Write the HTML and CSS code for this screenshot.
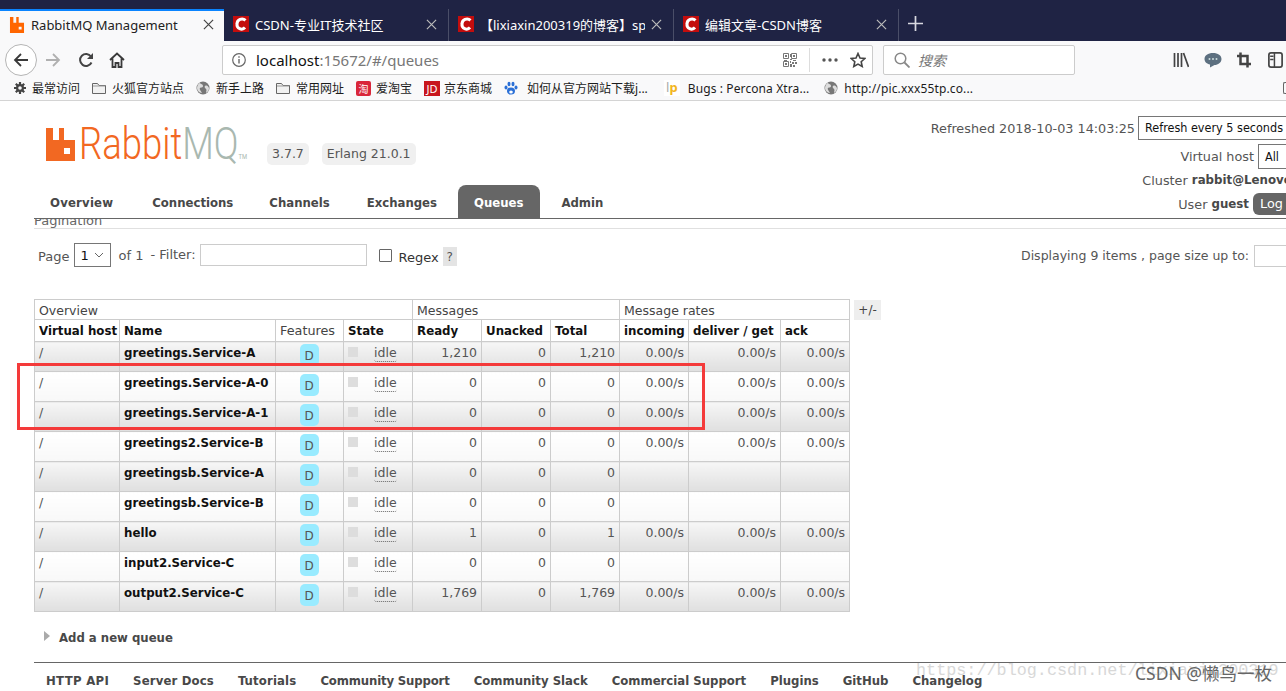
FILE: index.html
```html
<!DOCTYPE html>
<html lang="en">
<head>
<meta charset="utf-8">
<title>RabbitMQ Management</title>
<link rel="stylesheet" href="styles.css">
</head>
<body>
<svg class="defs" width="0" height="0">
  <symbol id="rabbit" viewBox="0 0 29 33"><path fill-rule="evenodd" d="M0 0h7v12h6V0h5v12h11v21H0zM18 20v6h6v-6z"/></symbol>
  <symbol id="csdn" viewBox="0 0 16 16"><rect width="16" height="16" fill="#c30d0d"/><path d="M12.5 4.400A5 5 0 0 0 4 8a4.600 4.600 0 0 0 8 3.600" fill="none" stroke="#fff" stroke-width="3"/></symbol>
  <symbol id="folder" viewBox="0 0 14 14"><path d="M.5 2.500h5l1.500 2h6.500v8H.5z" fill="#f1f1f1" stroke="#666"/><path d="M1 5h12" stroke="#999"/></symbol>
  <symbol id="globe" viewBox="0 0 14 14"><circle cx="7" cy="7" r="6.500" fill="#777"/><path d="M3 2c2 1 4 1 4 3S5 6 4 7s1 3 2 5c-3 0-5-3-5-5s1-3 2-5zM9 5c2-1 3 0 4 2 0 2-1 4-3 5 0-2 1-3 0-4S8 6 9 5z" fill="#ddd"/></symbol>
  <symbol id="close" viewBox="0 0 12 12"><path d="M1 1l10 10M11 1L1 11" fill="none" stroke="currentColor" stroke-width="1.300"/></symbol>
</svg>

<div class="browser">
  <div class="tabstrip">
    <div class="tab tab-active">
      <svg class="favicon rabbit-fav"><use href="#rabbit"/></svg>
      <span class="tab-title">RabbitMQ Management</span>
      <svg class="tab-close"><use href="#close"/></svg>
    </div>
    <div class="tab">
      <svg class="favicon"><use href="#csdn"/></svg>
      <span class="tab-title">CSDN-专业IT技术社区</span>
      <svg class="tab-close"><use href="#close"/></svg>
    </div>
    <div class="tab">
      <svg class="favicon"><use href="#csdn"/></svg>
      <span class="tab-title">【lixiaxin200319的博客】spring</span>
      <svg class="tab-close"><use href="#close"/></svg>
    </div>
    <div class="tab">
      <svg class="favicon"><use href="#csdn"/></svg>
      <span class="tab-title">编辑文章-CSDN博客</span>
      <svg class="tab-close"><use href="#close"/></svg>
    </div>
    <svg class="new-tab" viewBox="0 0 14 14"><path d="M7 0v14M0 7h14" stroke="#d8d8e0" stroke-width="1.600"/></svg>
  </div>

  <div class="navbar">
    <div class="back-btn">
      <svg viewBox="0 0 16 16" class="nav-ico"><path d="M15 8H2M8 2L2 8l6 6" fill="none" stroke="#3a3a3a" stroke-width="1.800"/></svg>
    </div>
    <svg viewBox="0 0 16 16" class="nav-ico forward"><path d="M1 8h13M8 2l6 6-6 6" fill="none" stroke="#b0b0b0" stroke-width="1.800"/></svg>
    <svg viewBox="0 0 16 16" class="nav-ico reload"><path d="M13.500 10.500A6 6 0 1 1 13 4.500" fill="none" stroke="#444" stroke-width="2"/><path d="M15 1v6H9z" fill="#444"/></svg>
    <svg viewBox="0 0 16 16" class="nav-ico home"><path d="M1 8l7-6.500L15 8M3.500 6.500V15h3v-4h3v4h3V6.500" fill="none" stroke="#3a3a3a" stroke-width="1.800"/></svg>
    <div class="urlbar">
      <svg viewBox="0 0 14 14" class="info"><circle cx="7" cy="7" r="6.300" fill="none" stroke="#666" stroke-width="1.200"/><path d="M7 6v4.500M7 3.200v1.500" stroke="#666" stroke-width="1.400"/></svg>
      <span class="url"><span class="url-host">localhost</span>:15672/#/queues</span>
      <svg viewBox="0 0 14 14" class="qr"><path d="M.5.500h5v5h-5zM8.500.500h5v5h-5zM.5 8.500h5v5h-5z" fill="none" stroke="#777"/><path d="M2 2h2v2H2zM10 2h2v2h-2zM2 10h2v2H2zM7 1h1v3H7zM7 6h2v1H7zM10 7h3v1h-3zM1 7h3v1H1zM7 8h1v2H7zM9 9h2v2H9zM12 9h2v2h-2zM7 11h2v3H7zM10 12h2v2h-2z" fill="#777"/></svg>
      <span class="url-sep"></span>
      <svg viewBox="0 0 16 4" class="dots"><circle cx="2" cy="2" r="1.700" fill="#555"/><circle cx="8" cy="2" r="1.700" fill="#555"/><circle cx="14" cy="2" r="1.700" fill="#555"/></svg>
      <svg viewBox="0 0 16 16" class="star"><path d="M8 1.500l2 4.500 4.800.5-3.600 3.200 1 4.800L8 12.100l-4.200 2.400 1-4.800L1.200 6.500 6 6z" fill="none" stroke="#444" stroke-width="1.600"/></svg>
    </div>
    <div class="searchbar">
      <svg viewBox="0 0 16 16" class="lens"><circle cx="6.500" cy="6.500" r="5.300" fill="none" stroke="#888" stroke-width="1.500"/><path d="M10.500 10.500L15.500 15.500" stroke="#888" stroke-width="1.800"/></svg>
      <span class="search-hint">搜索</span>
    </div>
    <svg viewBox="0 0 16 16" class="tool library"><path d="M1.500 1v14M5 1v14M8.500 1v14M10.500 1l5 14" stroke="#444" stroke-width="1.700" fill="none"/></svg>
    <svg viewBox="0 0 18 16" class="tool speech"><path d="M9 1c5 0 8.500 2.500 8.500 6s-3.500 6-7 6L6 15.500V12.500C3 12 .5 10 .5 7 .5 3.500 4 1 9 1z" fill="#5d7080"/><circle cx="5.500" cy="7" r="1" fill="#cdd"/><circle cx="9" cy="7" r="1" fill="#cdd"/><circle cx="12.500" cy="7" r="1" fill="#cdd"/></svg>
    <svg viewBox="0 0 14 15" class="tool crop"><path d="M3.500 0v11.500H14M0 3.500h10.500V15" fill="none" stroke="#444" stroke-width="2.500"/></svg>
    <svg viewBox="0 0 14 15" class="tool sidebar"><rect x=".8" y=".8" width="12.400" height="13.400" rx="2" fill="none" stroke="#444" stroke-width="1.600"/><path d="M6 1v13M2 4h3M2 7h3" stroke="#444" stroke-width="1.400"/></svg>
  </div>

  <div class="bookmarks">
    <span class="bm"><svg viewBox="0 0 14 14" class="bm-ico gear"><path d="M7 1v12M1 7h12M2.800 2.800l8.400 8.400M11.200 2.800l-8.400 8.400" stroke="#444" stroke-width="2.200"/><circle cx="7" cy="7" r="4" fill="#444"/><circle cx="7" cy="7" r="1.800" fill="#f9f9fa"/></svg>最常访问</span>
    <span class="bm"><svg class="bm-ico"><use href="#folder"/></svg>火狐官方站点</span>
    <span class="bm"><svg class="bm-ico"><use href="#globe"/></svg>新手上路</span>
    <span class="bm"><svg class="bm-ico"><use href="#folder"/></svg>常用网址</span>
    <span class="bm"><span class="bm-badge taobao">淘</span>爱淘宝</span>
    <span class="bm"><span class="bm-badge jd">JD</span>京东商城</span>
    <span class="bm"><svg viewBox="0 0 14 14" class="bm-ico baidu"><ellipse cx="7" cy="10" rx="4" ry="3.500" fill="#2a6fd6"/><ellipse cx="2" cy="6.500" rx="1.500" ry="2" fill="#2a6fd6"/><ellipse cx="5" cy="3" rx="1.500" ry="2.200" fill="#2a6fd6"/><ellipse cx="9" cy="3" rx="1.500" ry="2.200" fill="#2a6fd6"/><ellipse cx="12" cy="6.500" rx="1.500" ry="2" fill="#2a6fd6"/><ellipse cx="7" cy="11" rx="1.800" ry="1.500" fill="#fff"/></svg>如何从官方网站下载j...</span>
    <span class="bm bm-lp"><span class="lp"><span class="lp-l">l</span><span class="lp-p">p</span></span>Bugs : Percona Xtra...</span>
    <span class="bm bm-latin"><svg class="bm-ico"><use href="#globe"/></svg>http://pic.xxx55tp.co...</span>
    <span class="bm-more"></span>
  </div>
</div>

<div class="page">
  <header class="mq-header">
    <div class="brand">
      <svg class="logo-mark"><use href="#rabbit"/></svg>
      <span class="logo-text"><span class="logo-inner"><span class="logo-rabbit">Rabbit</span><span class="logo-mq">MQ</span><span class="logo-tm">TM</span></span></span>
      <span class="pill pill-ver">3.7.7</span>
      <span class="pill">Erlang 21.0.1</span>
    </div>
    <div class="status">
      <div class="status-row status-refresh">Refreshed 2018-10-03 14:03:25<span class="fake-select sel-refresh">Refresh every 5 seconds</span></div>
      <div class="status-row status-vhost">Virtual host<span class="fake-select sel-vhost">All</span></div>
      <div class="status-row status-cluster">Cluster <b>rabbit@Lenovo-PC</b></div>
      <div class="status-row status-user">User <b>guest</b><span class="logout">Log out</span></div>
    </div>
  </header>

  <nav class="tabs-nav">
    <a class="nav-item nav-overview">Overview</a>
    <a class="nav-item nav-connections">Connections</a>
    <a class="nav-item">Channels</a>
    <a class="nav-item">Exchanges</a>
    <a class="nav-item nav-current">Queues</a>
    <a class="nav-item">Admin</a>
  </nav>

  <main class="content">
    <div class="pagination-title"><div class="pagination-clip">Pagination</div></div>
    <div class="pagination">
      <div class="pag-left">
        <span class="lbl-page">Page</span>
        <span class="page-select">1<svg viewBox="0 0 10 6" class="chev"><path d="M1 1l4 4 4-4" fill="none" stroke="#666"/></svg></span>
        <span class="lbl-of">of 1</span>
        <span class="lbl-filter">- Filter:</span>
        <span class="filter-input"></span>
        <span class="checkbox"></span>
        <span class="lbl-regex">Regex</span>
        <span class="help">?</span>
      </div>
      <div class="pag-right">Displaying 9 items , page size up to:<span class="size-input">100</span></div>
    </div>

    <div class="table-wrap">
      <table class="queues">
        <colgroup>
          <col class="c-vh"><col class="c-name"><col class="c-feat"><col class="c-n"><col class="c-n"><col class="c-n"><col class="c-n"><col class="c-n"><col class="c-dg"><col class="c-n">
        </colgroup>
        <thead>
          <tr class="group"><th colspan="4">Overview</th><th colspan="3">Messages</th><th colspan="3">Message rates</th></tr>
          <tr class="cols"><th>Virtual host</th><th>Name</th><th class="plain">Features</th><th>State</th><th>Ready</th><th>Unacked</th><th>Total</th><th>incoming</th><th>deliver / get</th><th>ack</th></tr>
        </thead>
        <tbody>
          <tr class="alt1"><td>/</td><td class="qname">greetings.Service-A</td><td class="ctr"><span class="badge">D</span></td><td class="state"><span class="sq"></span><span class="idle">idle</span></td><td class="num">1,210</td><td class="num">0</td><td class="num">1,210</td><td class="num">0.00/s</td><td class="num">0.00/s</td><td class="num">0.00/s</td></tr>
          <tr class="alt2"><td>/</td><td class="qname">greetings.Service-A-0</td><td class="ctr"><span class="badge">D</span></td><td class="state"><span class="sq"></span><span class="idle">idle</span></td><td class="num">0</td><td class="num">0</td><td class="num">0</td><td class="num">0.00/s</td><td class="num">0.00/s</td><td class="num">0.00/s</td></tr>
          <tr class="alt1"><td>/</td><td class="qname">greetings.Service-A-1</td><td class="ctr"><span class="badge">D</span></td><td class="state"><span class="sq"></span><span class="idle">idle</span></td><td class="num">0</td><td class="num">0</td><td class="num">0</td><td class="num">0.00/s</td><td class="num">0.00/s</td><td class="num">0.00/s</td></tr>
          <tr class="alt2"><td>/</td><td class="qname">greetings2.Service-B</td><td class="ctr"><span class="badge">D</span></td><td class="state"><span class="sq"></span><span class="idle">idle</span></td><td class="num">0</td><td class="num">0</td><td class="num">0</td><td class="num">0.00/s</td><td class="num">0.00/s</td><td class="num">0.00/s</td></tr>
          <tr class="alt1"><td>/</td><td class="qname">greetingsb.Service-A</td><td class="ctr"><span class="badge">D</span></td><td class="state"><span class="sq"></span><span class="idle">idle</span></td><td class="num">0</td><td class="num">0</td><td class="num">0</td><td></td><td></td><td></td></tr>
          <tr class="alt2"><td>/</td><td class="qname">greetingsb.Service-B</td><td class="ctr"><span class="badge">D</span></td><td class="state"><span class="sq"></span><span class="idle">idle</span></td><td class="num">0</td><td class="num">0</td><td class="num">0</td><td></td><td></td><td></td></tr>
          <tr class="alt1"><td>/</td><td class="qname">hello</td><td class="ctr"><span class="badge">D</span></td><td class="state"><span class="sq"></span><span class="idle">idle</span></td><td class="num">1</td><td class="num">0</td><td class="num">1</td><td class="num">0.00/s</td><td class="num">0.00/s</td><td class="num">0.00/s</td></tr>
          <tr class="alt2"><td>/</td><td class="qname">input2.Service-C</td><td class="ctr"><span class="badge">D</span></td><td class="state"><span class="sq"></span><span class="idle">idle</span></td><td class="num">0</td><td class="num">0</td><td class="num">0</td><td></td><td></td><td></td></tr>
          <tr class="alt1"><td>/</td><td class="qname">output2.Service-C</td><td class="ctr"><span class="badge">D</span></td><td class="state"><span class="sq"></span><span class="idle">idle</span></td><td class="num">1,769</td><td class="num">0</td><td class="num">1,769</td><td class="num">0.00/s</td><td class="num">0.00/s</td><td class="num">0.00/s</td></tr>
        </tbody>
      </table>
      <span class="plusminus">+/-</span>
    </div>

    <div class="add-queue"><span class="tri"></span>Add a new queue</div>

    <footer class="mq-footer">
      <a class="f-first">HTTP API</a><a class="f-mid">Server Docs</a><a class="f-mid">Tutorials</a><a class="f-tight">Community Support</a><a>Community Slack</a><a>Commercial Support</a><a>Plugins</a><a>GitHub</a><a>Changelog</a>
    </footer>
  </main>
</div>

<div class="annotation"></div>
<div class="wm-url">https://blog.csdn.net/lixiaxin200319</div>
<div class="wm-csdn">CSDN @懒鸟一枚</div>
</body>
</html>
```

FILE: styles.css
```css
* { box-sizing: border-box; }
html, body { margin: 0; padding: 0; width: 1286px; height: 691px; overflow: hidden; background: #fff; }
body { position: relative; font-family: "DejaVu Sans", Verdana, sans-serif; font-size: 12px; color: #484848; }
.defs { position: absolute; }

/* browser chrome */
.browser { font-family: "Noto Sans", "Noto Sans CJK SC", sans-serif; }
.tabstrip { height: 41px; background: #1f2344; padding-top: 9px; display: flex; align-items: stretch; }
.tab { width: 225px; height: 32px; display: flex; align-items: center; padding: 0 11px 2px 9px; color: #fff; font-size: 13px; white-space: nowrap; overflow: hidden; border-right: 1px solid #4a4e68; flex: none; }
.tab-active { width: 224px; background: #f9f9fa; border-top: 2px solid #0a84ff; border-right: 0; color: #222; padding: 0 10px 3px 9px; }
.favicon { width: 16px; height: 16px; flex: none; margin-right: 6px; }
.rabbit-fav { fill: #ff6600; }
.tab-title { flex: 1; overflow: hidden; min-width: 0; }
.tab-close { width: 11px; height: 11px; flex: none; color: #bbb; margin-left: 6px; }
.tab-active .tab-close { color: #444; }
.new-tab { width: 15px; height: 15px; margin: 7px 0 0 9px; }

.navbar { height: 35px; padding-top: 3px; background: #f9f9fa; display: flex; align-items: center; position: relative; }
.back-btn { width: 32px; height: 32px; margin-left: 5px; border: 1px solid #b5b5b5; border-radius: 50%; background: #fff; display: flex; align-items: center; justify-content: center; flex: none; }
.nav-ico { width: 16px; height: 16px; flex: none; }
.forward { margin-left: 8px; }
.reload { margin-left: 17px; }
.home { margin-left: 15px; }
.urlbar { width: 651px; height: 30px; margin-left: 97px; background: #fff; border: 1px solid #ccc; border-radius: 2px; display: flex; align-items: center; padding-left: 9px; flex: none; }
.info { width: 14px; height: 14px; flex: none; }
.url { margin-left: 10px; flex: 1; font-size: 15px; color: #777; }
.url-host { color: #111; }
.qr { width: 14px; height: 14px; flex: none; }
.url-sep { width: 1px; height: 24px; background: #ddd; margin: 0 12px 0 12px; }
.dots { width: 16px; height: 4px; flex: none; }
.star { width: 16px; height: 16px; margin: 0 6px 0 12px; flex: none; }
.searchbar { width: 192px; height: 30px; margin-left: 10px; background: #fff; border: 1px solid #ccc; border-radius: 2px; display: flex; align-items: center; padding-left: 10px; flex: none; }
.lens { width: 16px; height: 16px; flex: none; }
.search-hint { margin-left: 8px; font-style: italic; font-size: 14px; color: #777; }
.tool { height: 16px; flex: none; }
.library { width: 16px; margin-left: 98px; }
.speech { width: 18px; margin-left: 15px; }
.crop { width: 14px; margin-left: 15px; }
.sidebar { width: 15px; margin-left: 17px; }

.bookmarks { height: 25px; background: #f9f9fa; border-bottom: 1px solid #d4d4d4; display: flex; align-items: center; padding-left: 13px; font-size: 12px; color: #1c1c1c; white-space: nowrap; }
.bm { display: flex; align-items: center; margin-right: 12px; flex: none; }
.bm-ico { width: 14px; height: 14px; margin-right: 6px; flex: none; }
.gear { margin-right: 5px; }
.baidu { margin-right: 9px; }
.bm-badge { width: 15px; height: 15px; margin-right: 5px; display: flex; align-items: center; justify-content: center; color: #fff; font-size: 10px; border-radius: 2px; }
.taobao { background: #d9263a; }
.jd { width: 16px; background: #c8161d; border-radius: 0; font-size: 11px; margin-right: 4px; }
.bm-lp { margin-left: 4px; margin-right: 15px; letter-spacing: .1px; }
.bm-latin { letter-spacing: .14px; margin-right: 0; }
.bm-more { margin-left: auto; width: 3px; height: 12px; border: 1px solid #666; border-right: 0; border-radius: 2px 0 0 2px; flex: none; }
.lp { width: 16px; height: 16px; margin-right: 8px; display: flex; justify-content: center; background: #fff; font-size: 13px; line-height: 15px; }
.lp-l { color: #aaa; }
.lp-p { color: #f2b61e; font-weight: 700; }

/* page */
.page { width: 1286px; height: 591px; overflow: hidden; }
.mq-header { height: 84px; display: flex; justify-content: space-between; width: 1340px; }
.brand { display: flex; align-items: flex-start; padding-left: 46px; }
.logo-mark { width: 29px; height: 33px; fill: #f26822; margin-top: 27px; flex: none; }
.logo-text { margin: 17px 0 0 4px; font-family: Roboto, sans-serif; font-weight: 300; font-size: 44px; line-height: 52px; white-space: nowrap; width: 188px; display: block; }
.logo-inner { display: inline-block; transform: scaleX(.83); transform-origin: left center; }
.logo-rabbit { color: #f26822; }
.logo-mq { color: #a9b8b0; }
.logo-tm { font-size: 7px; color: #a9b8b0; font-weight: 400; }
.pill { margin-top: 42px; height: 22px; line-height: 22px; padding: 0 5px; background: #f0f0f0; border-radius: 5px; font-size: 12.500px; color: #555; margin-left: 13px; }
.pill-ver { margin-left: 0; }
.status { width: 480px; padding-top: 15px; color: #555; }
.status-row { display: flex; justify-content: flex-end; align-items: center; white-space: pre; font-size: 12.800px; }
.status-row b { color: #484848; font-size: 11.800px; }
.fake-select { display: block; background: #fff; border: 1px solid #767676; color: #111; font-family: "DejaVu Sans Condensed", "DejaVu Sans", sans-serif; font-stretch: condensed; font-size: 12.500px; margin-left: 3px; }
.status-refresh { height: 24px; }
.sel-refresh { width: 202px; height: 24px; line-height: 22px; padding-left: 6px; }
.status-vhost { height: 25px; margin-top: 4px; }
.sel-vhost { width: 82px; height: 25px; line-height: 23px; padding-left: 6px; margin-left: 4px; }
.status-cluster { height: 20px; margin-top: 1px; padding-right: 26px; }
.status-user { height: 22px; margin-top: 3px; }
.logout { display: block; width: 87px; height: 22px; line-height: 22px; padding-left: 7px; background: #666; color: #fff; border-radius: 6px; margin-left: 4px; }

.tabs-nav { height: 34px; border-bottom: 1px solid #666; display: flex; margin-left: 34px; width: 1300px; font-family: "DejaVu Sans Condensed", "DejaVu Sans", sans-serif; font-stretch: condensed; }
.nav-item { padding: 0 16px; line-height: 35px; font-size: 13px; font-weight: 700; color: #484848; margin-right: 5px; }
.nav-overview { margin-right: 7px; letter-spacing: .2px; }
.nav-connections { margin-right: 4px; }
.nav-current { background: #666; color: #fff; border-radius: 8px 8px 0 0; padding-right: 17px; }

.content { padding: 0 0 0 34px; width: 1340px; }
.pagination-title { height: 10px; border-bottom: 1px solid #e0e0e0; overflow: hidden; width: 1300px; }
.pagination-clip { margin-top: -5px; font-size: 13px; line-height: 14px; color: #666; }
.pagination { height: 70px; display: flex; justify-content: space-between; width: 1286px; font-size: 13px; color: #555; }
.pag-left { display: flex; align-items: flex-start; padding: 14px 0 0 4px; }
.lbl-page { margin-top: 6px; }
.page-select { width: 37px; height: 24px; margin-left: 5px; border: 1px solid #767676; display: flex; align-items: center; justify-content: space-between; padding: 0 6px 0 5px; color: #111; }
.chev { width: 10px; height: 6px; }
.lbl-of { margin: 5px 0 0 7px; }
.lbl-filter { margin: 4px 0 0 7px; }
.filter-input { width: 167px; height: 22px; margin: 1px 0 0 4px; border: 1px solid #ccc; background: #fff; }
.checkbox { width: 13px; height: 13px; margin: 6px 0 0 12px; border: 1px solid #666; border-radius: 1px; }
.lbl-regex { margin: 7px 0 0 7px; color: #333; }
.help { width: 14px; height: 19px; margin: 4px 0 0 4px; background: #e4e4e4; text-align: center; line-height: 20px; font-size: 12px; }
.pag-right { padding-top: 19px; display: flex; white-space: pre; font-size: 12.500px; }
.size-input { display: block; width: 66px; height: 22px; margin: -3px 0 0 5px; border: 1px solid #ccc; text-align: right; padding-right: 4px; }

.table-wrap { display: flex; align-items: flex-start; gap: 4px; }
.queues { border-collapse: collapse; table-layout: fixed; width: 815px; font-size: 12.500px; color: #555; flex: none; }
.c-vh { width: 85px; } .c-name { width: 156px; } .c-feat { width: 68px; } .c-n { width: 69px; } .c-dg { width: 92px; }
.queues th, .queues td { border: 1px solid #ccc; padding: 0 4px; text-align: left; vertical-align: top; white-space: nowrap; overflow: visible; }
.queues .group th { height: 20px; font-weight: 400; line-height: 17px; padding-top: 2px; color: #444; }
.queues .cols th { height: 22px; line-height: 19px; padding-top: 2px; color: #111; font-weight: 700; font-size: 11.800px; }
.queues .cols th.plain { font-weight: 400; color: #444; font-size: 12.800px; padding-top: 1px; }
.queues tbody tr { height: 30px; }
.queues td { line-height: 20px; padding-top: 1px; }
.alt1 td { background: linear-gradient(#f6f6f6, #dfdfdf); }
.alt2 td { background: linear-gradient(#fff, #f8f8f8); }
.queues td.qname { font-weight: 700; color: #111; font-size: 11.800px; }
.queues td.num { text-align: right; }
.queues td.ctr { text-align: center; padding-right: 5px; }
.badge { display: inline-block; width: 19px; height: 22px; margin-top: 1px; background: #99ebff; border-radius: 5px; line-height: 24px; font-size: 12px; color: #555; vertical-align: top; }
.queues td.state { padding-left: 4px; }
.sq { display: inline-block; width: 10px; height: 10px; background: #ddd; margin: 4px 0 0 0; vertical-align: top; }
.idle { display: inline-block; margin-left: 16px; border-bottom: 1px dotted #666; line-height: 17px; vertical-align: top; margin-top: 1px; border-radius: 3px; }
.plusminus { width: 27px; height: 20px; margin-top: 1px; background: #eee; text-align: center; line-height: 20px; font-size: 12px; color: #444; flex: none; }

.add-queue { height: 50px; padding: 18px 0 0 25px; position: relative; font-family: "DejaVu Sans Condensed", "DejaVu Sans", sans-serif; font-stretch: condensed; font-weight: 700; font-size: 13px; color: #484848; }
.tri { position: absolute; left: 10px; top: 19px; border-left: 6px solid #aaa; border-top: 5px solid transparent; border-bottom: 5px solid transparent; }
.mq-footer { border-top: 1px solid #666; width: 1300px; padding: 10px 0 0 12px; display: flex; gap: 24px; font-family: "DejaVu Sans Condensed", "DejaVu Sans", sans-serif; font-stretch: condensed; font-weight: 700; font-size: 13px; color: #484848; white-space: nowrap; }
.f-first { letter-spacing: .3px; }
.f-mid { letter-spacing: .15px; }
.f-tight { letter-spacing: -.15px; }

/* overlays added to the screenshot */
.annotation { position: absolute; left: 17px; top: 363px; width: 688px; height: 67px; border: 3px solid #f43a3a; }
.wm-url { position: absolute; left: 916px; top: 661px; font-family: "Liberation Mono", monospace; font-size: 16.800px; line-height: 20px; color: #d8d8d8; white-space: nowrap; }
.wm-csdn { position: absolute; left: 1135px; top: 661px; font-family: "Noto Sans", "Noto Sans CJK SC", sans-serif; font-size: 17.500px; line-height: 24px; color: #666; white-space: nowrap; }
```
